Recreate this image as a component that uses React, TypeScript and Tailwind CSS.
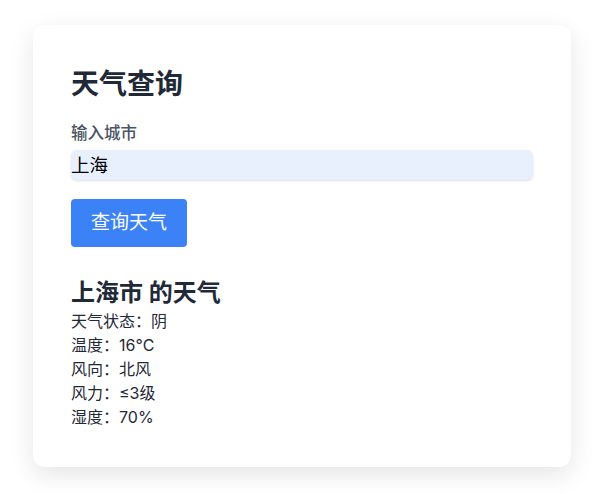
import { useState } from "react";

const font = {
  fontFamily: '"Inter", "Noto Sans CJK SC", "Noto Sans", sans-serif',
};

export default function App() {
  const [city, setCity] = useState("上海");

  const weather = {
    name: "上海市",
    status: "阴",
    temp: "16°C",
    windDir: "北风",
    windPower: "≤3级",
    humidity: "70%",
  };

  return (
    <div className="min-h-screen bg-white pt-[25px] pl-[33px]" style={font}>
      <div className="w-[538px] rounded-xl bg-white px-[38px] pt-[38px] pb-[38px] shadow-[0_8px_24px_rgba(0,0,0,0.1)]">
        <h1 className="text-[28px] leading-[42px] font-bold text-[#1f2937]">天气查询</h1>

        <label className="mt-[16px] block text-[16.5px] leading-6 font-medium text-[#4b5563]">
          输入城市
        </label>
        <input
          className="mt-[5px] block h-[30px] w-full rounded-md bg-[#e8f0fe] p-0 text-[18.5px] leading-[30px] text-black shadow-sm outline-none"
          value={city}
          onChange={(e) => setCity(e.target.value)}
        />

        <button className="mt-[19px] h-12 rounded bg-[#3b82f6] px-5 text-[19px] text-white">
          查询天气
        </button>

        <div className="mt-[30px] text-[#1f2937]">
          <h2 className="text-2xl leading-8 font-bold">{weather.name} 的天气</h2>
          <p className="text-base leading-6">天气状态：{weather.status}</p>
          <p className="text-base leading-6">温度：{weather.temp}</p>
          <p className="text-base leading-6">风向：{weather.windDir}</p>
          <p className="text-base leading-6">风力：{weather.windPower}</p>
          <p className="text-base leading-6">湿度：{weather.humidity}</p>
        </div>
      </div>
    </div>
  );
}
